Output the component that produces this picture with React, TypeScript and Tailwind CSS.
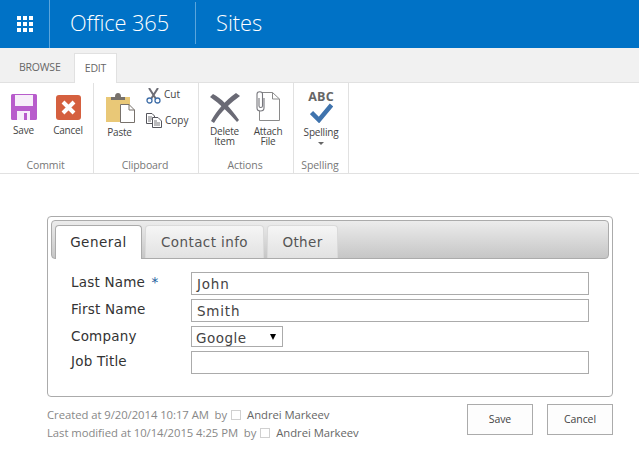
const ui = "font-['Open_Sans','Noto_Sans',sans-serif]";
const form = "font-['DejaVu_Sans',Verdana,sans-serif]";

function Waffle() {
  return (
    <svg width="16" height="16" viewBox="0 0 16 16" fill="#fff">
      {[0, 6, 12].flatMap((y) => [0, 6, 12].map((x) => <rect key={`${x}-${y}`} x={x} y={y} width="4" height="4" />))}
    </svg>
  );
}

function RibbonLabel({ children }: { children: React.ReactNode }) {
  return <div className="text-[10px] leading-[10px] text-[#444] text-center tracking-[-0.2px]">{children}</div>;
}

function SaveIcon() {
  return (
    <svg width="26" height="26" viewBox="0 0 26 26">
      <path d="M1.500 0H24.500A1.500 1.500 0 0 1 26 1.500V24.500A1.500 1.500 0 0 1 24.500 26H1.500A1.500 1.500 0 0 1 0 24.500V1.500A1.500 1.500 0 0 1 1.500 0Z" fill="#b85ccc" />
      <rect x="4" y="1" width="18" height="11" fill="#f7eefa" />
      <rect x="6" y="17" width="13" height="9" fill="#f7eefa" />
      <rect x="13" y="19" width="3" height="7" fill="#b85ccc" />
    </svg>
  );
}

function CancelIcon() {
  return (
    <svg width="25" height="25" viewBox="0 0 25 25">
      <rect width="25" height="25" rx="3" fill="#d5603f" />
      <path d="M7 7L18 18M18 7L7 18" stroke="#fff" strokeWidth="4" />
    </svg>
  );
}

function PasteIcon() {
  return (
    <svg width="29" height="30" viewBox="0 0 29 30">
      <rect x="0" y="4" width="24" height="25" fill="#e9c877" />
      <path d="M5 7V4H9C9 1 10 0 12 0S15 1 15 4H19V7Z" fill="#77716b" />
      <path d="M14.500 11.500H23L28.500 17V29.500H14.500Z" fill="#fff" stroke="#77716b" />
      <path d="M23 11.500V17H28.500" fill="none" stroke="#77716b" />
    </svg>
  );
}

function CutIcon() {
  return (
    <svg width="15" height="16" viewBox="0 0 15 16" fill="none">
      <path d="M3 0L10 11M12 0L5 11" stroke="#6d6d75" strokeWidth="2" />
      <circle cx="3.500" cy="12.500" r="2.500" stroke="#3f6ea8" strokeWidth="1.300" />
      <circle cx="11.500" cy="12.500" r="2.500" stroke="#3f6ea8" strokeWidth="1.300" />
    </svg>
  );
}

function CopyIcon() {
  return (
    <svg width="16" height="15" viewBox="0 0 16 15" fill="#fff" stroke="#55555c">
      <path d="M0.500 0.500H6L8.500 3V10.500H0.500Z" />
      <path d="M6.500 4.500H12L15.500 8V14.500H6.500Z" />
      <path d="M2 4H6M2 6H6M2 8H5M8 8H11M8 10H14M8 12H14" strokeWidth="0.800" />
    </svg>
  );
}

function DeleteIcon() {
  return (
    <svg width="30" height="30" viewBox="0 0 30 30" fill="#6a6a75">
      <path d="M0 4L3 1C11 5 20 14 29 27L27 29C19 20 10 11 0 4Z" />
      <path d="M26 0L30 3C22 9 11 18 4 30L1 28C7 17 16 7 26 0Z" />
    </svg>
  );
}

function AttachIcon() {
  return (
    <svg width="25" height="31" viewBox="0 0 25 31" fill="none">
      <path d="M3.500 1.500H16.500L23.500 8V29.500H3.500Z" fill="#fff" stroke="#8a8a8a" />
      <path d="M16.500 1.500V8H23.500" stroke="#8a8a8a" />
      <path d="M3 7V15C3 17 6.500 17 6.500 15V3C6.500 0 1 0 1 3V17C1 21 8 21 8 17V7" stroke="#77777d" strokeWidth="1.100" fill="#fff" />
    </svg>
  );
}

function CheckIcon() {
  return (
    <svg width="23" height="20" viewBox="0 0 23 20">
      <path d="M1.500 9.500L9 17L21.500 2" fill="none" stroke="#3f73ad" strokeWidth="4.500" />
    </svg>
  );
}

function Group({ width, label, children }: { width: string; label: string; children: React.ReactNode }) {
  return (
    <div className={`${width} h-full flex flex-col border-r border-[#e1e1e1] shrink-0`}>
      <div className="h-[72px] flex">{children}</div>
      <div className="text-[10.500px] leading-[14px] text-[#777] text-center mt-[3px] pr-[2px] tracking-[-0.1px]">{label}</div>
    </div>
  );
}

function Field({ label, children, className }: { label: React.ReactNode; children: React.ReactNode; className: string }) {
  return (
    <div className={`flex items-start ${className}`}>
      <div className="w-[120px] shrink-0 pt-[1px] text-[13.500px] leading-[18px] text-[#333] tracking-[0.2px]">{label}</div>
      {children}
    </div>
  );
}

function TextBox({ value }: { value: string }) {
  return (
    <div className="w-[398px] h-[23px] border border-[#ababab] bg-white pl-[5px] text-[13.500px] leading-[23px] text-[#444] tracking-[0.8px]">
      {value}
    </div>
  );
}

function Btn({ children }: { children: React.ReactNode }) {
  return (
    <div className="w-[66px] h-[31px] border border-[#ababab] bg-[#fdfdfd] flex items-center justify-center text-[10.500px] text-[#444] tracking-[-0.1px]">
      {children}
    </div>
  );
}

function Modified({ text }: { text: string }) {
  return (
    <div className="h-[18px] flex items-center whitespace-pre">
      <span>{text}</span>
      <span className="w-[10px] h-[10px] border border-[#d0d0d0] ml-[4px] mr-[6px]" />
      <span className="text-[#666]">Andrei Markeev</span>
    </div>
  );
}

export default function App() {
  return (
    <div className={`w-[639px] h-[456px] overflow-hidden bg-white ${ui}`}>
      <header className="h-[48px] bg-[#0072c6] flex text-white">
        <div className="w-[50px] h-full border-r border-[#5aa5dc] flex items-center justify-center">
          <Waffle />
        </div>
        <div className="w-[146px] h-[42px] mt-[2px] pl-[20px] border-r border-[#5aa5dc] flex items-center text-[21.800px] font-light whitespace-nowrap tracking-[-0.1px]">
          Office 365
        </div>
        <div className="pl-[20px] h-[42px] mt-[2px] flex items-center text-[21.800px] font-light">Sites</div>
      </header>

      <div className="h-[35px] bg-[#f1f1f1] border-b border-[#e1e1e1] flex items-end pl-[19px] text-[10.500px]">
        <div className="w-[55px] h-[29px] flex items-center text-[#666] tracking-[-0.2px]">BROWSE</div>
        <div className="w-[43px] h-[30px] -mb-px bg-white border border-b-0 border-[#e1e1e1] flex items-center justify-center text-[#666] tracking-[-0.2px]">EDIT</div>
      </div>

      <div className="h-[91px] border-b border-[#e1e1e1] flex">
        <Group width="w-[94px]" label="Commit">
          <div className="w-[47px] flex flex-col items-center pt-[11px]">
            <SaveIcon />
            <div className="mt-[5px]"><RibbonLabel>Save</RibbonLabel></div>
          </div>
          <div className="w-[40px] flex flex-col items-center pt-[12px] ml-[1px]">
            <CancelIcon />
            <div className="mt-[5px]"><RibbonLabel>Cancel</RibbonLabel></div>
          </div>
        </Group>
        <Group width="w-[105px]" label="Clipboard">
          <div className="w-[51px] flex flex-col items-center pt-[10px] pl-[2px]">
            <PasteIcon />
            <div className="mt-[4px] -ml-[2px]"><RibbonLabel>Paste</RibbonLabel></div>
          </div>
          <div className="flex flex-col pl-[1px]">
            <div className="flex items-start gap-[3px] pt-[5px] h-[30px] text-[10px] leading-[12px] text-[#444]">
              <CutIcon />
              <span>Cut</span>
            </div>
            <div className="flex items-center gap-[3px] text-[10px] leading-[15px] text-[#444]">
              <CopyIcon />
              <span>Copy</span>
            </div>
          </div>
        </Group>
        <Group width="w-[95px]" label="Actions">
          <div className="w-[49px] flex flex-col items-center pt-[10px] pl-[2px]">
            <DeleteIcon />
            <div className="mt-[3px]"><RibbonLabel>Delete<br />Item</RibbonLabel></div>
          </div>
          <div className="w-[40px] flex flex-col items-center pt-[8px]">
            <AttachIcon />
            <div className="mt-[4px]"><RibbonLabel>Attach<br />File</RibbonLabel></div>
          </div>
        </Group>
        <Group width="w-[55px]" label="Spelling">
          <div className="w-full flex flex-col items-center pt-[8px]">
            <div className="text-[12.500px] leading-[12px] font-bold text-[#666] tracking-[0.2px]">ABC</div>
            <CheckIcon />
            <div className="mt-[4px]"><RibbonLabel>Spelling</RibbonLabel></div>
            <div className="mt-[5px] w-0 h-0 border-x-[3px] border-x-transparent border-t-[3px] border-t-[#666]" />
          </div>
        </Group>
      </div>

      <div className={`ml-[47px] mt-[42px] w-[566px] h-[181px] border border-[#ababab] rounded-[4px] p-[3px] ${form}`}>
        <div className="h-[39px] rounded-[4px] border border-[#ababab] bg-gradient-to-b from-[#ececec] to-[#c6c6c6] flex items-end pl-[3px] gap-[3px] text-[13.500px]">
          <div className="w-[87px] h-[34px] -mb-px bg-white border border-b-0 border-[#ababab] rounded-t-[4px] flex items-center justify-center text-[#333] tracking-[0.5px]">General</div>
          <div className="w-[119px] h-[33px] rounded-t-[4px] border-x border-t border-[#dadada] bg-gradient-to-b from-[#f5f5f5] to-[#e2e2e2] flex items-center justify-center text-[#555] tracking-[0.4px]">Contact info</div>
          <div className="w-[71px] h-[33px] rounded-t-[4px] border-x border-t border-[#dadada] bg-gradient-to-b from-[#f5f5f5] to-[#e2e2e2] flex items-center justify-center text-[#555] tracking-[0.35px]">Other</div>
        </div>
        <div className="pl-[20px] pt-[13px] flex flex-col">
          <Field label={<>Last Name <span className="ml-[2px] text-[#1c5f9e]">*</span></>} className="h-[27px]">
            <TextBox value="John" />
          </Field>
          <Field label="First Name" className="h-[27px]">
            <TextBox value="Smith" />
          </Field>
          <Field label="Company" className="h-[25px]">
            <div className="w-[92px] h-[21px] border border-[#ababab] bg-white pl-[4px] pr-[6px] flex justify-between text-[13.500px] leading-[22px] text-[#444] tracking-[0.5px]">
              <span>Google</span>
              <span className="mt-[7px] w-0 h-0 border-x-[3.500px] border-x-transparent border-t-[6px] border-t-black" />
            </div>
          </Field>
          <Field label="Job Title" className="h-[23px]">
            <TextBox value="" />
          </Field>
        </div>
      </div>

      <div className="ml-[47px] mt-[7px] w-[566px] flex justify-between">
        <div className="pt-[2px] text-[11.300px] text-[#888] tracking-[-0.05px]">
          <Modified text="Created at 9/20/2014 10:17 AM  by" />
          <Modified text="Last modified at 10/14/2015 4:25 PM  by" />
        </div>
        <div className="flex gap-[14px]">
          <Btn>Save</Btn>
          <Btn>Cancel</Btn>
        </div>
      </div>
    </div>
  );
}
